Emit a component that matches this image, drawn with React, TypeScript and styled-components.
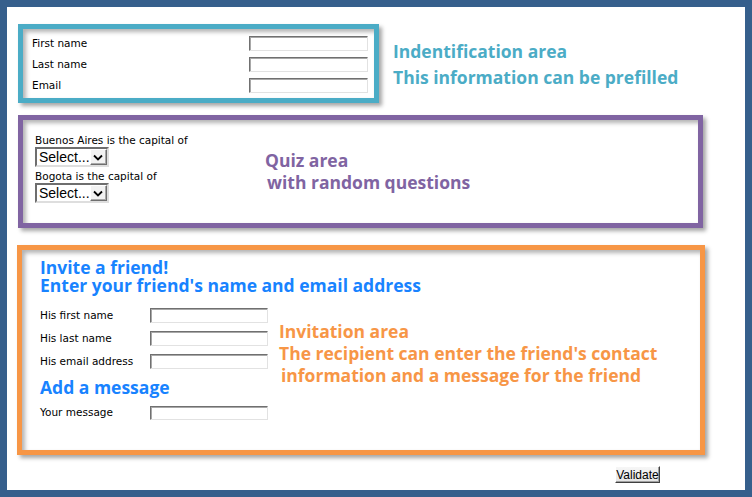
import React from 'react';
import styled, { createGlobalStyle } from 'styled-components';

const GlobalStyle = createGlobalStyle`
    html, body {
        margin: 0;
        padding: 0;
        background: #ffffff;
    }
    * {
        box-sizing: border-box;
    }
`;

const TEAL = '#4bacc6';
const PURPLE = '#8064a2';
const ORANGE = '#f79646';
const BLUE = '#1883ff';

const Page = styled.div`
    width: 752px;
    height: 497px;
    border: 7px solid #365f8c;
    background: #ffffff;
    padding: 17px 0 0 10px;
    font-family: 'DejaVu Sans', Verdana, sans-serif;
    font-size: 10.5px;
    color: #000000;
    overflow: hidden;
`;

const Area = styled.div<{ color: string; w: number; h: number; mt?: number; ml?: number }>`
    width: ${p => p.w}px;
    height: ${p => p.h}px;
    margin-top: ${p => p.mt ?? 0}px;
    margin-left: ${p => p.ml ?? 0}px;
    border: 5px solid ${p => p.color};
    background: #ffffff;
    box-shadow: 3px 3px 4px rgba(0, 0, 0, 0.35), inset 3px 3px 4px rgba(0, 0, 0, 0.3);
    flex-shrink: 0;
`;

const TopRow = styled.div`
    display: flex;
    align-items: flex-start;
    gap: 14px;
`;

const Note = styled.div<{ color: string; lh: number; mt?: number }>`
    font-family: 'Open Sans', 'Noto Sans', sans-serif;
    font-weight: 700;
    font-size: 17.5px;
    line-height: ${p => p.lh}px;
    color: ${p => p.color};
    margin-top: ${p => p.mt ?? 0}px;
    white-space: nowrap;
`;

const NoteLine = styled.div<{ indent?: number }>`
    padding-left: ${p => p.indent ?? 0}px;
`;

const IdGrid = styled.div`
    display: grid;
    grid-template-columns: 217px 119px;
    row-gap: 6px;
    padding: 7px 0 0 9px;
    align-items: center;
`;

const Label = styled.span`
    line-height: 15px;
    white-space: nowrap;
`;

const TextBox = styled.input<{ w: number; h: number }>`
    width: ${p => p.w}px;
    height: ${p => p.h}px;
    margin: 0;
    padding: 0 2px;
    background: #ffffff;
    border: 1px solid;
    border-color: #707070 #e2e2e2 #e2e2e2 #707070;
    box-shadow: inset 1px 1px 0 #a8a8a8;
    outline: none;
    font-size: 11px;
`;

const QuizBody = styled.div`
    display: grid;
    grid-template-columns: 230px auto;
    padding: 13px 0 0 12px;
`;

const QuizColumn = styled.div`
    display: flex;
    flex-direction: column;
`;

const Question = styled.div<{ mt?: number }>`
    line-height: 14px;
    margin-top: ${p => p.mt ?? 0}px;
    white-space: nowrap;
`;

const FakeSelect = styled.div`
    width: 74px;
    height: 20px;
    display: flex;
    align-items: stretch;
    border: 2px solid;
    border-color: #6e6e6e #dedede #dedede #6e6e6e;
    background: #ffffff;
    font-family: 'Liberation Sans', Arial, sans-serif;
    font-size: 14px;
`;

const SelectText = styled.span`
    flex: 1;
    line-height: 16px;
    padding-left: 2px;
    white-space: nowrap;
`;

const ArrowBox = styled.span`
    width: 18px;
    display: flex;
    align-items: center;
    justify-content: center;
    background: #f2f2f2;
    border: 1px solid;
    border-color: #ffffff #6e6e6e #6e6e6e #ffffff;
    box-shadow: inset -1px -1px 0 #a8a8a8;
`;

const InviteBody = styled.div`
    padding: 8px 0 0 18px;
`;

const Heading = styled.div<{ lh: number; mt?: number }>`
    font-family: 'Open Sans', 'Noto Sans', sans-serif;
    font-weight: 700;
    font-size: 17.5px;
    line-height: ${p => p.lh}px;
    color: ${BLUE};
    margin-top: ${p => p.mt ?? 0}px;
    white-space: nowrap;
`;

const InviteRow = styled.div`
    display: flex;
    align-items: flex-start;
    margin-top: 14px;
`;

const InviteColumn = styled.div`
    width: 239px;
    flex-shrink: 0;
`;

const FriendGrid = styled.div`
    display: grid;
    grid-template-columns: 110px 118px;
    row-gap: 8px;
    align-items: center;
`;

const MessageGrid = styled(FriendGrid)`
    margin-top: 8px;
`;

const Footer = styled.div`
    width: 688px;
    display: flex;
    justify-content: flex-end;
    padding-right: 45px;
    margin-top: 11px;
`;

const ValidateButton = styled.button`
    width: 45px;
    height: 17px;
    padding: 0;
    margin: 0;
    display: flex;
    align-items: center;
    justify-content: center;
    font-family: 'Liberation Sans', Arial, sans-serif;
    font-size: 12px;
    line-height: 12px;
    color: #000000;
    background: linear-gradient(#f6f6f6, #e4e4e4);
    border: 1px solid;
    border-color: #ffffff #404040 #404040 #ffffff;
    box-shadow: inset -1px -1px 0 #a0a0a0;
    cursor: pointer;
`;

const Chevron = () => (
    <svg width="10" height="7" viewBox="0 0 10 7">
        <path d="M1 1.5 L5 5.5 L9 1.5" fill="none" stroke="#000" strokeWidth="1.8" />
    </svg>
);

const Select: React.FC = () => (
    <FakeSelect>
        <SelectText>Select...</SelectText>
        <ArrowBox>
            <Chevron />
        </ArrowBox>
    </FakeSelect>
);

const identityFields = ['First name', 'Last name', 'Email'];
const friendFields = ['His first name', 'His last name', 'His email address'];

const App: React.FC = () => {
    return (
        <>
            <GlobalStyle />
            <Page>
                <TopRow>
                    <Area color={TEAL} w={361} h={79} ml={1}>
                        <IdGrid>
                            {identityFields.map(f => (
                                <React.Fragment key={f}>
                                    <Label>{f}</Label>
                                    <TextBox w={119} h={15} />
                                </React.Fragment>
                            ))}
                        </IdGrid>
                    </Area>
                    <Note color={TEAL} lh={26} mt={14}>
                        <NoteLine>Indentification area</NoteLine>
                        <NoteLine>This information can be prefilled</NoteLine>
                    </Note>
                </TopRow>

                <Area color={PURPLE} w={685} h={113} mt={12} ml={1}>
                    <QuizBody>
                        <QuizColumn>
                            <Question>Buenos Aires is the capital of</Question>
                            <Select />
                            <Question mt={2}>Bogota is the capital of</Question>
                            <Select />
                        </QuizColumn>
                        <Note color={PURPLE} lh={22} mt={16}>
                            <NoteLine>Quiz area</NoteLine>
                            <NoteLine indent={2}>with random questions</NoteLine>
                        </Note>
                    </QuizBody>
                </Area>

                <Area color={ORANGE} w={688} h={210} mt={17}>
                    <InviteBody>
                        <Heading lh={18}>
                            Invite a friend!
                            <br />
                            Enter your friend's name and email address
                        </Heading>
                        <InviteRow>
                            <InviteColumn>
                                <FriendGrid>
                                    {friendFields.map(f => (
                                        <React.Fragment key={f}>
                                            <Label>{f}</Label>
                                            <TextBox w={118} h={15} />
                                        </React.Fragment>
                                    ))}
                                </FriendGrid>
                                <Heading lh={20} mt={8}>Add a message</Heading>
                                <MessageGrid>
                                    <Label>Your message</Label>
                                    <TextBox w={118} h={14} />
                                </MessageGrid>
                            </InviteColumn>
                            <Note color={ORANGE} lh={22} mt={12}>
                                <NoteLine>Invitation area</NoteLine>
                                <NoteLine>The recipient can enter the friend's contact</NoteLine>
                                <NoteLine indent={2}>information and a message for the friend</NoteLine>
                            </Note>
                        </InviteRow>
                    </InviteBody>
                </Area>

                <Footer>
                    <ValidateButton>Validate</ValidateButton>
                </Footer>
            </Page>
        </>
    );
};

export default App;
